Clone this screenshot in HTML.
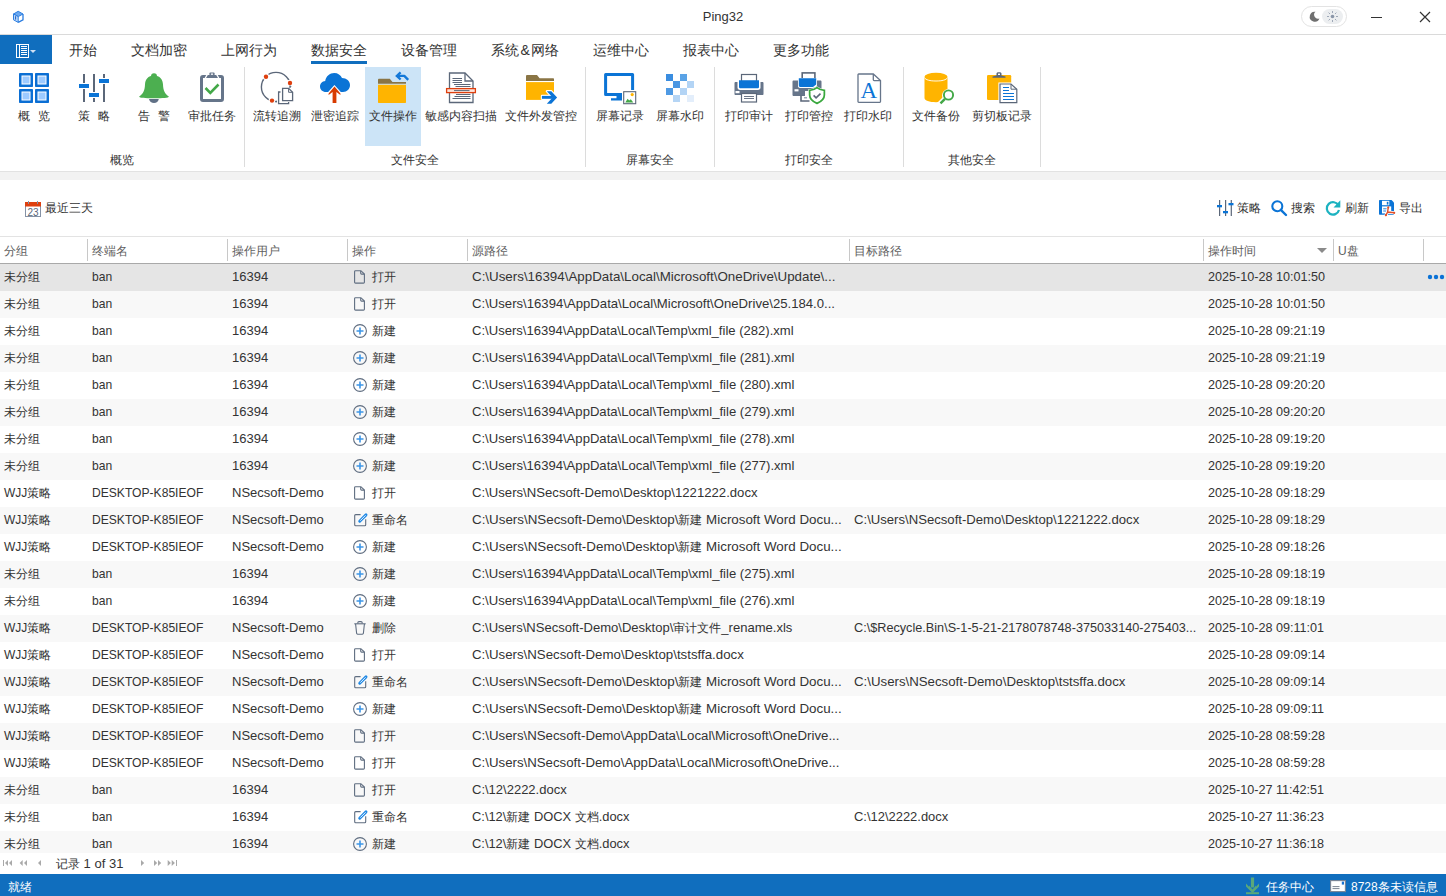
<!DOCTYPE html><html><head><meta charset="utf-8"><title>Ping32</title><style>
*{margin:0;padding:0;box-sizing:border-box}
html,body{width:1446px;height:896px;overflow:hidden;background:#fff}
body{position:relative;font-family:"Liberation Sans",sans-serif;color:#333;font-size:13px}
.a{position:absolute}
.c{font-size:12px}
.sp{display:inline-block;width:8px}
svg{position:absolute;overflow:visible}
.tab{position:absolute;top:36px;height:28px;line-height:28px;font-size:14px;color:#333;white-space:nowrap}
.rl{position:absolute;top:108px;height:16px;line-height:16px;font-size:12px;color:#333;white-space:nowrap;text-align:center}
.gl{position:absolute;top:152px;height:16px;line-height:16px;font-size:12px;color:#333;white-space:nowrap;text-align:center}
.sep{position:absolute;top:67px;width:1px;height:100px;background:#dcdcdc}
.hd{position:absolute;top:238px;height:26px;line-height:26px;font-size:12px;color:#606060;white-space:nowrap}
.hs{position:absolute;top:239px;width:1px;height:22px;background:#c8c8c8}
.row{position:absolute;left:0;width:1446px;height:27px}
.row.g{background:#f8f8f8}
.row.sel{background:#e5e5e5}
.cell{position:absolute;top:-1px;height:27px;line-height:27px;white-space:nowrap;color:#333}
.tb{position:absolute;top:200px;height:16px;line-height:16px;font-size:12px;color:#333;white-space:nowrap}
</style></head><body>
<svg style="left:12px;top:10px" width="13" height="14" viewBox="0 0 13 14">
<path d="M1.5 4 L6.2 6.6 L11 4 L6.2 1.3 Z" fill="#6aa8f0" stroke="#2b7de0" stroke-width="1"/>
<path d="M1.5 4 V9.8 L6.2 12.4 V6.6 Z" fill="#bcd8fa" stroke="#2b7de0" stroke-width="1"/>
<path d="M11 4 V9.8 L6.2 12.4" fill="none" stroke="#2b7de0" stroke-width="1.3"/>
<path d="M3.6 6.2 V9.6" stroke="#1f5fc0" stroke-width="1"/>
</svg>
<div class="a" style="left:0;top:0;width:1446px;height:34px;line-height:33px;text-align:center;font-size:13px;color:#333">Ping32</div>
<div class="a" style="left:1301px;top:6px;width:46px;height:21px;border:1px solid #e3e3e3;border-radius:11px;background:#fff"></div>
<div class="a" style="left:1322px;top:9px;width:21px;height:15px;border-radius:8px;background:#eceef0"></div>
<svg style="left:1309px;top:11px" width="11" height="11" viewBox="0 0 11 11"><path d="M6.5 0.8 A5 5 0 1 0 10.4 7.6 A4 4 0 0 1 6.5 0.8 Z" fill="#707070"/></svg>
<svg style="left:1326px;top:10px" width="13" height="13" viewBox="0 0 13 13"><circle cx="6.5" cy="6.5" r="1.8" fill="#8a96a8"/>
<g stroke="#8a96a8" stroke-width="0.8"><path d="M6.5 1V3M6.5 10V12M1 6.5H3M10 6.5H12M2.6 2.6L4 4M9 9L10.4 10.4M2.6 10.4L4 9M9 4L10.4 2.6"/></g></svg>
<div class="a" style="left:1371px;top:17px;width:11px;height:1px;background:#333"></div>
<svg style="left:1419px;top:11px" width="12" height="12" viewBox="0 0 12 12"><path d="M1 1L11 11M11 1L1 11" stroke="#333" stroke-width="1.2"/></svg>
<div class="a" style="left:0;top:34px;width:1446px;height:1px;background:#dadada"></div>
<div class="a" style="left:0;top:35px;width:52px;height:29px;background:#106ebe"></div>
<svg style="left:16px;top:44px" width="21" height="14" viewBox="0 0 21 14" shape-rendering="crispEdges">
<rect x="0" y="0" width="13" height="1" fill="#fff"/><rect x="0" y="13" width="13" height="1" fill="#fff"/>
<rect x="0" y="0" width="1" height="14" fill="#fff"/><rect x="12" y="0" width="1" height="14" fill="#fff"/>
<rect x="3" y="0" width="1" height="14" fill="#fff"/>
<rect x="5" y="2" width="6" height="1" fill="#fff"/><rect x="5" y="4" width="6" height="1" fill="#fff"/><rect x="5" y="6" width="6" height="1" fill="#fff"/><rect x="5" y="8" width="6" height="1" fill="#fff"/><rect x="5" y="10" width="6" height="1" fill="#fff"/>
<path d="M14 6 H20 L17 9 Z" fill="#cfe0f3" shape-rendering="auto"/>
</svg>
<div class="tab" style="left:69px">开始</div>
<div class="tab" style="left:131px">文档加密</div>
<div class="tab" style="left:221px">上网行为</div>
<div class="tab" style="left:311px">数据安全</div>
<div class="tab" style="left:401px">设备管理</div>
<div class="tab" style="left:491px">系统<span style="margin:0 1.4px">&amp;</span>网络</div>
<div class="tab" style="left:593px">运维中心</div>
<div class="tab" style="left:683px">报表中心</div>
<div class="tab" style="left:773px">更多功能</div>
<div class="a" style="left:311px;top:61px;width:56px;height:3px;background:#106ebe"></div>
<div class="a" style="left:365px;top:67px;width:56px;height:79px;background:#cce4f7"></div>
<div class="sep" style="left:244px"></div>
<div class="sep" style="left:585px"></div>
<div class="sep" style="left:714px"></div>
<div class="sep" style="left:903px"></div>
<div class="sep" style="left:1040px"></div>
<div class="a" style="left:0;top:171px;width:1446px;height:1px;background:#e2e2e2"></div>
<div class="a" style="left:0;top:172px;width:1446px;height:8px;background:#f2f2f2"></div>
<div class="rl" style="left:-16px;width:100px">概<i class="sp"></i>览</div>
<div class="rl" style="left:44px;width:100px">策<i class="sp"></i>略</div>
<div class="rl" style="left:104px;width:100px">告<i class="sp"></i>警</div>
<div class="rl" style="left:162px;width:100px">审批任务</div>
<div class="rl" style="left:227px;width:100px">流转追溯</div>
<div class="rl" style="left:285px;width:100px">泄密追踪</div>
<div class="rl" style="left:343px;width:100px">文件操作</div>
<div class="rl" style="left:411px;width:100px">敏感内容扫描</div>
<div class="rl" style="left:491px;width:100px">文件外发管控</div>
<div class="rl" style="left:570px;width:100px">屏幕记录</div>
<div class="rl" style="left:630px;width:100px">屏幕水印</div>
<div class="rl" style="left:699px;width:100px">打印审计</div>
<div class="rl" style="left:759px;width:100px">打印管控</div>
<div class="rl" style="left:818px;width:100px">打印水印</div>
<div class="rl" style="left:886px;width:100px">文件备份</div>
<div class="rl" style="left:952px;width:100px">剪切板记录</div>
<div class="gl" style="left:72px;width:100px">概览</div>
<div class="gl" style="left:365px;width:100px">文件安全</div>
<div class="gl" style="left:600px;width:100px">屏幕安全</div>
<div class="gl" style="left:759px;width:100px">打印安全</div>
<div class="gl" style="left:922px;width:100px">其他安全</div>
<svg style="left:18px;top:72px" width="32" height="32" viewBox="0 0 32 32"><rect x="1" y="1" width="14" height="14" rx="0.8" fill="#0b6fd4"/><rect x="3.5" y="3.5" width="9" height="9" fill="#fff"/><rect x="4.5" y="4.5" width="7" height="7" fill="#9ccaff"/><rect x="17" y="1" width="14" height="14" rx="0.8" fill="#0b6fd4"/><rect x="19.5" y="3.5" width="9" height="9" fill="#fff"/><rect x="20.5" y="4.5" width="7" height="7" fill="#9ccaff"/><rect x="1" y="17" width="14" height="14" rx="0.8" fill="#0b6fd4"/><rect x="3.5" y="19.5" width="9" height="9" fill="#fff"/><rect x="4.5" y="20.5" width="7" height="7" fill="#9ccaff"/><rect x="17" y="17" width="14" height="14" rx="0.8" fill="#0b6fd4"/><rect x="19.5" y="19.5" width="9" height="9" fill="#fff"/><rect x="20.5" y="20.5" width="7" height="7" fill="#9ccaff"/></svg>
<svg style="left:78px;top:72px" width="32" height="32" viewBox="0 0 32 32">
<g fill="#5b6779"><rect x="5" y="2" width="2" height="9"/><rect x="5" y="17" width="2" height="13"/>
<rect x="15" y="2" width="2" height="18"/><rect x="15" y="26" width="2" height="4"/>
<rect x="25" y="2" width="2" height="4"/><rect x="25" y="12" width="2" height="18"/></g>
<g fill="#0b74d6"><rect x="1" y="12" width="10" height="4"/><rect x="11" y="21" width="10" height="4"/><rect x="21" y="7" width="10" height="4"/></g>
</svg>
<svg style="left:138px;top:72px" width="32" height="32" viewBox="0 0 32 32">
<circle cx="16" cy="4.3" r="3" fill="#4caf50"/>
<path d="M16 3.5 C10 3.5 7.2 7.5 7 12.5 C6.8 18 5.5 21.5 1 24.8 C1.5 25.8 7 26.3 16 26.3 C25 26.3 30.5 25.8 31 24.8 C26.5 21.5 25.2 18 25 12.5 C24.8 7.5 22 3.5 16 3.5Z" fill="#4caf50"/>
<path d="M11 27 H20.8 C20.3 29.6 18.5 31 16 31 C13.5 31 11.6 29.6 11 27Z" fill="#607086"/>
</svg>
<svg style="left:198px;top:72px" width="32" height="32" viewBox="0 0 32 32">
<rect x="3.5" y="4.5" width="21" height="24" rx="1.5" fill="#fff" stroke="#66758a" stroke-width="3"/>
<path d="M6.4 6.4 H21.6 L19.5 2.4 H8.5 Z" fill="#fff"/>
<path d="M8 5.9 H20 L18.2 3 H9.8 Z" fill="#66758a"/>
<rect x="11.4" y="0.4" width="5.2" height="3.2" rx="1" fill="#66758a"/>
<rect x="12.9" y="1.5" width="2.2" height="1.3" fill="#fff"/>
<path d="M7.5 16 L12.3 20.8 L20.5 12.5" fill="none" stroke="#43a848" stroke-width="2.6"/>
</svg>
<svg style="left:260px;top:71px" width="34" height="34" viewBox="0 0 34 34">
<circle cx="16" cy="16" r="14.6" fill="none" stroke="#5b6779" stroke-width="1.4"/>
<circle cx="6" cy="5.8" r="3.3" fill="#fff"/><circle cx="30" cy="12" r="3.3" fill="#fff"/><circle cx="12" cy="29.6" r="3.3" fill="#fff"/>
<circle cx="6" cy="5.8" r="2.2" fill="#de3f0e"/><circle cx="30" cy="12" r="2.2" fill="#de3f0e"/><circle cx="12" cy="29.6" r="2.2" fill="#de3f0e"/>
<rect x="17" y="16" width="17" height="18" fill="#fff"/>
<path d="M30 14.5 V17 M15.5 30.5 H17" stroke="#5b6779" stroke-width="1.3"/>
<path d="M20.5 21 H18.6 V32.6 H28.6 V31" fill="none" stroke="#5b6779" stroke-width="1.3"/>
<path d="M22.6 17.3 H28.6 L32.6 21.3 V29.6 H22.6 Z" fill="#fff" stroke="#5b6779" stroke-width="1.3"/>
<path d="M28.6 17.3 V21.3 H32.6" fill="none" stroke="#5b6779" stroke-width="1"/>
</svg>
<svg style="left:319px;top:72px" width="32" height="32" viewBox="0 0 32 32">
<path d="M7 20 C3.5 20 1 17.5 1 14.5 C1 11.5 3.3 9.2 6.2 9 C7 4.2 10.8 1 15.2 1 C18.8 1 21.8 3 23 6 C27.5 6 31 9 31 13 C31 17 28 20 24 20 Z" fill="#0b74d6"/>
<path d="M15.4 13 L8 21.2 V24.5 H13.5 V32 H17.5 V24.5 H23 V21.2 Z" fill="#fff"/>
<path d="M15.5 14.5 L9.6 21.5 V23 L13.6 20 V31 H17.4 V20 L21.4 23 V21.5 Z" fill="#d83b01"/>
</svg>
<svg style="left:377px;top:71px" width="34" height="34" viewBox="0 0 34 34">
<path d="M1 9 C1 8.3 1.5 7.8 2.2 7.8 H12.8 L15.5 11 H29 V12.8 H1Z" fill="#8a7545"/>
<path d="M1 13.8 H29 V31.3 C29 31.7 28.7 32 28.3 32 H1.7 C1.3 32 1 31.7 1 31.3Z" fill="#ffb400"/>
<path d="M20 4.9 H27.3 L31.2 8.9" fill="none" stroke="#1478d8" stroke-width="2.3" stroke-linejoin="round"/>
<path d="M23.6 1.3 L19.8 4.9 L23.6 8.5" fill="none" stroke="#1478d8" stroke-width="2.3"/>
</svg>
<svg style="left:445px;top:72px" width="32" height="32" viewBox="0 0 32 32">
<path d="M4.5 1 H20 L28 9 V30.5 H4.5 Z" fill="#fff" stroke="#5b6779" stroke-width="1.3"/>
<path d="M20 1 V9 H28" fill="none" stroke="#5b6779" stroke-width="1.3"/>
<g stroke="#5b6779" stroke-width="1"><path d="M7.5 6.5H17M7.5 8.5H17M7.5 10.5H17M9 12.5H25.5M10.5 14.5H25.5M11 22.5H25.5M9.5 24.5H25.5M7.5 26.5H25.5"/></g>
<rect x="1.6" y="16.6" width="28.8" height="4" fill="#fde3da" stroke="#de3f0e" stroke-width="1.3"/>
<path d="M9 18.6H24.5" stroke="#5b6779" stroke-width="1"/>
</svg>
<svg style="left:524px;top:72px" width="34" height="34" viewBox="0 0 34 34">
<path d="M2 4 C2 3.4 2.4 3.1 3 3.1 H13 L15.6 6.3 H29.3 C29.7 6.3 30 6.6 30 7 V9 H2 Z" fill="#8a7545"/>
<path d="M2 10.1 H30 V27.9 H2Z" fill="#ffb400"/>
<g stroke="#fff" stroke-width="2.2" fill="#fff" stroke-linejoin="round"><path d="M22.8 19.2 H27.3 L33.1 25.5 L27.3 31.7 H22.8 L28.6 25.5 Z"/><rect x="17.9" y="23.9" width="10" height="2.9"/></g>
<g fill="#0b74d6"><path d="M22.8 19.2 H27.3 L33.1 25.5 L27.3 31.7 H22.8 L28.6 25.5 Z"/><rect x="17.9" y="23.9" width="11" height="2.9"/></g>
</svg>
<svg style="left:603px;top:72px" width="34" height="34" viewBox="0 0 34 34">
<path d="M19 22.4 H2.6 V2.4 H29.6 V17.9" fill="none" stroke="#0b74d6" stroke-width="3" stroke-linejoin="round"/>
<path d="M8 26.3 H13.5 V23.5 H19 V28.6 H8 Z" fill="#0b74d6"/>
<rect x="20.7" y="19.7" width="12" height="12" fill="#fff" stroke="#5b6779" stroke-width="1.1"/>
<circle cx="29.2" cy="22.6" r="1.6" fill="#ffb400"/>
<path d="M22.3 30.5 L24.6 26.8 L26.2 28.6 L27.8 27.2 L30.3 30.5 Z" fill="#43a848"/>
</svg>
<svg style="left:666px;top:74px" width="28" height="28" viewBox="0 0 28 28"><rect x="0" y="0" width="7" height="7" fill="#3a8de0"/><rect x="14" y="0" width="7" height="7" fill="#5aa3e6"/><rect x="7" y="7" width="7" height="7" fill="#4a97e3"/><rect x="21" y="7" width="7" height="7" fill="#b3d4f5"/><rect x="0" y="14" width="7" height="7" fill="#4f9ae4"/><rect x="14" y="14" width="7" height="7" fill="#b3d4f5"/><rect x="7" y="21" width="7" height="7" fill="#b5d5f5"/><rect x="21" y="21" width="7" height="7" fill="#e3eefb"/></svg>
<svg style="left:733px;top:72px" width="32" height="32" viewBox="0 0 32 32">
<rect x="8.5" y="2.5" width="15" height="7" fill="#fff" stroke="#5b6779" stroke-width="1.2"/>
<path d="M2.5 10 C2 10 1.5 10.5 1.5 11 V22 C1.5 22.8 2 23 2.5 23 H29.5 C30 23 30.5 22.8 30.5 22 V11 C30.5 10.5 30 10 29.5 10 Z" fill="#66758a"/>
<path d="M4.5 9.5 H27.5 V15.5 C27.5 17 26.5 18 25 18 H7 C5.5 18 4.5 17 4.5 15.5 Z" fill="#fff"/>
<path d="M6 8.2 H26 V15 C26 15.7 25.6 16.2 25 16.2 H7 C6.4 16.2 6 15.7 6 15 Z" fill="#0b74d6"/>
<rect x="2.5" y="19" width="4" height="2.2" fill="#fff"/>
<rect x="8.5" y="21.5" width="15" height="8.5" fill="#fff" stroke="#5b6779" stroke-width="1.2"/>
<path d="M11 24.5H21M11 26.5H21" stroke="#5b6779" stroke-width="0.9"/>
</svg>
<svg style="left:792px;top:71px" width="34" height="34" viewBox="0 0 34 34">
<rect x="10.2" y="1.9" width="12.7" height="6.5" fill="#fff" stroke="#5b6779" stroke-width="1.6"/>
<path d="M1.5 9.5 C1 9.5 0.5 10 0.5 10.5 V24 C0.5 24.5 1 25 1.5 25 H13 V20 H29.5 V10.5 C29.5 10 29 9.5 28.5 9.5 Z" fill="#66758a"/>
<path d="M6 7 H25 V14 C25 15.5 24 16 23 16.5 L20.5 17 H8 C6.8 17 6 16 6 15 Z" fill="#fff"/>
<path d="M6.8 7.3 H24.2 V13.5 L21 16 H8.5 C7.5 16 6.8 15.3 6.8 14.5Z" fill="#0b74d6"/>
<rect x="2.5" y="18.2" width="4" height="2.2" fill="#fff"/>
<path d="M9 24.5 V30 H17.5" fill="none" stroke="#5b6779" stroke-width="1.6"/>
<path d="M12 26.8 H15" stroke="#8a96a8" stroke-width="1.2"/>
<g transform="translate(25 24.5) scale(0.92) translate(-25 -23.6)"><path d="M25 13.5 C22 15.8 19 16.5 15.5 16.8 V23 C15.5 28 19 31 25 33.5 C31 31 34.5 28 34.5 23 V16.8 C31 16.5 28 15.8 25 13.5Z" fill="#fff"/>
<path d="M25 15 C22.5 17 19.8 17.8 17 18 V23 C17 27.5 20 30 25 32.2 C30 30 33 27.5 33 23 V18 C30.2 17.8 27.5 17 25 15Z" fill="#fff" stroke="#3aa83e" stroke-width="1.9"/>
<path d="M21.3 23.5 L24 26.2 L28.8 21.5" fill="none" stroke="#5b6779" stroke-width="1.7"/>
</g>
</svg>
<svg style="left:856px;top:72px" width="26" height="32" viewBox="0 0 26 32">
<path d="M2.7 2 H17.3 L24.5 8.6 V29.6 C24.5 30 24.2 30.3 23.8 30.3 H2.7 C2.3 30.3 2 30 2 29.6 V2.7 C2 2.3 2.3 2 2.7 2 Z" fill="#fff" stroke="#66758a" stroke-width="1.3"/>
<path d="M17.3 2 V7.8 C17.3 8.3 17.6 8.6 18.1 8.6 H24.5" fill="none" stroke="#66758a" stroke-width="1.3"/>
<text x="12.8" y="25.8" text-anchor="middle" font-family="Liberation Serif" font-size="23" fill="#0b74d6">A</text>
</svg>
<svg style="left:923px;top:72px" width="34" height="34" viewBox="0 0 34 34">
<path d="M1.5 5 V26 C1.5 28.5 6.5 30.2 13 30.2 C19.5 30.2 24.5 28.5 24.5 26 V5 Z" fill="#ffb400"/>
<ellipse cx="13" cy="4.8" rx="11.5" ry="4" fill="#ffb400"/>
<path d="M1.5 5.5 C2.5 8 7 9 13 9 C19 9 23.5 8 24.5 5.5" fill="none" stroke="#fff" stroke-width="0.9"/>
<circle cx="25.5" cy="23.5" r="6.5" fill="#fff"/>
<path d="M21.5 27 L16 32.5" stroke="#fff" stroke-width="5"/>
<circle cx="25.5" cy="23" r="4.6" fill="#fff" stroke="#43a848" stroke-width="1.9"/>
<path d="M22 26.8 L17.5 31.3" stroke="#43a848" stroke-width="2.4"/>
</svg>
<svg style="left:986px;top:72px" width="32" height="32" viewBox="0 0 32 32">
<rect x="1" y="3" width="24.2" height="25" rx="1.2" fill="#ffb400"/>
<path d="M6.5 5.8 H19.5 V4.6 L15.5 3.6 V1.5 C15.5 0.8 14.5 0.3 13 0.3 C11.5 0.3 10.5 0.8 10.5 1.5 V3.6 L6.5 4.6Z" fill="#5b6779"/><rect x="12" y="1.6" width="2" height="1.4" fill="#fff"/>
<path d="M13.4 11.5 H25 L31 17 V31.3 H13.4 Z" fill="#fff" stroke="#fff" stroke-width="2"/>
<path d="M14 12 H25 L30.8 17.2 V30.7 H14 Z" fill="#fff" stroke="#5b6779" stroke-width="1.2"/>
<path d="M25 12 V17.2 H30.8" fill="none" stroke="#5b6779" stroke-width="1"/>
<path d="M17 15.5H23M17 18.5H23M17 21.5H28M17 24.5H28M17 27.5H28" stroke="#0b74d6" stroke-width="1.1"/>
</svg>
<svg style="left:25px;top:201px" width="16" height="16" viewBox="0 0 16 16">
<rect x="0.5" y="3" width="15" height="12.5" fill="#fff" stroke="#8592a6" stroke-width="1"/>
<rect x="0" y="1" width="16" height="4.5" fill="#de3f0e"/>
<path d="M3.5 0V3M12.5 0V3" stroke="#8592a6" stroke-width="1"/>
<text x="8" y="14.6" text-anchor="middle" font-family="Liberation Sans" font-size="10" fill="#5b6779">23</text>
</svg>
<div class="tb" style="left:45px">最近三天</div>
<svg style="left:1217px;top:200px" width="16" height="16" viewBox="0 0 16 16">
<g fill="#5b6779"><rect x="2" y="0" width="1.2" height="16"/><rect x="8" y="0" width="1.2" height="16"/><rect x="13.7" y="0" width="1.2" height="16"/></g>
<g fill="#0b74d6"><rect x="0" y="5" width="5" height="2.3"/><rect x="6" y="11" width="5" height="2.3"/><rect x="11.5" y="3" width="5" height="2.3"/></g>
</svg>
<div class="tb" style="left:1237px">策略</div>
<svg style="left:1271px;top:200px" width="16" height="16" viewBox="0 0 16 16">
<circle cx="6.3" cy="6.3" r="5" fill="none" stroke="#0b74d6" stroke-width="2.1"/>
<path d="M9.8 9.8 L15 15" stroke="#0b74d6" stroke-width="2.4" stroke-linecap="round"/>
</svg>
<div class="tb" style="left:1291px">搜索</div>
<svg style="left:1325px;top:200px" width="16" height="16" viewBox="0 0 16 16">
<path d="M13.5 5.5 A6.2 6.2 0 1 0 14 10" fill="none" stroke="#1cb2c0" stroke-width="2.2"/>
<path d="M15.3 0.3 V7.5 H8.5 Z" fill="#1cb2c0"/>
</svg>
<div class="tb" style="left:1345px">刷新</div>
<svg style="left:1379px;top:200px" width="18" height="17" viewBox="0 0 18 17">
<path d="M0 1 C0 0.4 0.4 0 1 0 H12.5 L15 2.5 V13.7 C15 14.3 14.6 14.7 14 14.7 H1 C0.4 14.7 0 14.3 0 13.7 Z" fill="#0b74d6"/>
<rect x="3" y="0.8" width="7.3" height="4.4" fill="#fff"/><rect x="7.8" y="1.8" width="1.6" height="2.8" fill="#0b74d6"/>
<rect x="3" y="6.4" width="9.2" height="7" fill="#fff"/>
<path d="M4.2 8.8H8.2M4.2 11H7.5" stroke="#0b74d6" stroke-width="0.9"/>
<path d="M9.3 7.2 L8.6 12 L6.8 15.4 M8.6 12 L15.3 12.8" fill="none" stroke="#fff" stroke-width="3"/>
<path d="M9.3 7.2 L8.6 12 L6.8 15.4 M8.6 12 L15.3 12.8" fill="none" stroke="#e0502a" stroke-width="1.4" stroke-linecap="round"/>
<circle cx="9.3" cy="7.4" r="1" fill="#e0502a"/><circle cx="6.9" cy="15.2" r="1.1" fill="#e0502a"/><circle cx="15.2" cy="12.8" r="1.1" fill="#e0502a"/>
</svg>
<div class="tb" style="left:1399px">导出</div>
<div class="a" style="left:0;top:236px;width:1446px;height:1px;background:#e3e3e3"></div>
<div class="a" style="left:0;top:263px;width:1446px;height:1px;background:#a9a9a9"></div>
<div class="hd" style="left:4px">分组</div>
<div class="hs" style="left:87px"></div>
<div class="hd" style="left:92px">终端名</div>
<div class="hs" style="left:227px"></div>
<div class="hd" style="left:232px">操作用户</div>
<div class="hs" style="left:347px"></div>
<div class="hd" style="left:352px">操作</div>
<div class="hs" style="left:467px"></div>
<div class="hd" style="left:472px">源路径</div>
<div class="hs" style="left:849px"></div>
<div class="hd" style="left:854px">目标路径</div>
<div class="hs" style="left:1203px"></div>
<div class="hd" style="left:1208px">操作时间</div>
<div class="hs" style="left:1333px"></div>
<div class="hd" style="left:1338px">U盘</div>
<div class="hs" style="left:1423px"></div>
<svg style="left:1317px;top:248px" width="10" height="5" viewBox="0 0 10 5"><path d="M0 0H10L5 5Z" fill="#8a8a8a"/></svg>
<div class="a" style="left:0;top:264px;width:1446px;height:589px;overflow:hidden">
<div class="row sel" style="top:0px">
<div class="cell" style="left:4px"><span style="font-size:12px"><span class="c">未分组</span></span></div>
<div class="cell" style="left:92px"><span style="font-size:12.1px">ban</span></div>
<div class="cell" style="left:232px">16394</div>
<svg style="left:354px;top:6px" width="12" height="14" viewBox="0 0 12 14"><path d="M1.5 0.7 H6.9 L10.4 4.1 V12.2 C10.4 12.8 10.1 13.1 9.5 13.1 H1.5 C0.9 13.1 0.6 12.8 0.6 12.2 V1.5 C0.6 0.9 0.9 0.7 1.5 0.7Z" fill="none" stroke="#5f6d80" stroke-width="1.1"/><path d="M6.7 0.9 V3.2 C6.7 3.8 7 4.1 7.6 4.1 H10.2" fill="none" stroke="#5f6d80" stroke-width="1.1"/></svg>
<div class="cell" style="left:372px"><span class="c">打开</span></div>
<div class="cell" style="left:472px"><span style="font-size:13.35px">C:\Users\16394\AppData\Local\Microsoft\OneDrive\Update\...</span></div>
<div class="cell" style="left:1208px"><span style="font-size:12.6px">2025-10-28 10:01:50</span></div>
<svg style="left:1427px;top:10px" width="19" height="6" viewBox="0 0 19 6"><circle cx="3" cy="3" r="2.2" fill="#0b72d6"/><circle cx="9" cy="3" r="2.2" fill="#0b72d6"/><circle cx="15" cy="3" r="2.2" fill="#0b72d6"/></svg>
</div>
<div class="row g" style="top:27px">
<div class="cell" style="left:4px"><span style="font-size:12px"><span class="c">未分组</span></span></div>
<div class="cell" style="left:92px"><span style="font-size:12.1px">ban</span></div>
<div class="cell" style="left:232px">16394</div>
<svg style="left:354px;top:6px" width="12" height="14" viewBox="0 0 12 14"><path d="M1.5 0.7 H6.9 L10.4 4.1 V12.2 C10.4 12.8 10.1 13.1 9.5 13.1 H1.5 C0.9 13.1 0.6 12.8 0.6 12.2 V1.5 C0.6 0.9 0.9 0.7 1.5 0.7Z" fill="none" stroke="#5f6d80" stroke-width="1.1"/><path d="M6.7 0.9 V3.2 C6.7 3.8 7 4.1 7.6 4.1 H10.2" fill="none" stroke="#5f6d80" stroke-width="1.1"/></svg>
<div class="cell" style="left:372px"><span class="c">打开</span></div>
<div class="cell" style="left:472px"><span style="font-size:13.15px">C:\Users\16394\AppData\Local\Microsoft\OneDrive\25.184.0...</span></div>
<div class="cell" style="left:1208px"><span style="font-size:12.6px">2025-10-28 10:01:50</span></div>
</div>
<div class="row" style="top:54px">
<div class="cell" style="left:4px"><span style="font-size:12px"><span class="c">未分组</span></span></div>
<div class="cell" style="left:92px"><span style="font-size:12.1px">ban</span></div>
<div class="cell" style="left:232px">16394</div>
<svg style="left:353px;top:6px" width="14" height="14" viewBox="0 0 14 14"><circle cx="7" cy="7" r="6.4" fill="none" stroke="#5f6d80" stroke-width="1.1"/><path d="M7 3.5V10.5M3.5 7H10.5" stroke="#3c95e6" stroke-width="1.6"/></svg>
<div class="cell" style="left:372px"><span class="c">新建</span></div>
<div class="cell" style="left:472px"><span style="font-size:13.07px">C:\Users\16394\AppData\Local\Temp\xml_file (282).xml</span></div>
<div class="cell" style="left:1208px"><span style="font-size:12.6px">2025-10-28 09:21:19</span></div>
</div>
<div class="row g" style="top:81px">
<div class="cell" style="left:4px"><span style="font-size:12px"><span class="c">未分组</span></span></div>
<div class="cell" style="left:92px"><span style="font-size:12.1px">ban</span></div>
<div class="cell" style="left:232px">16394</div>
<svg style="left:353px;top:6px" width="14" height="14" viewBox="0 0 14 14"><circle cx="7" cy="7" r="6.4" fill="none" stroke="#5f6d80" stroke-width="1.1"/><path d="M7 3.5V10.5M3.5 7H10.5" stroke="#3c95e6" stroke-width="1.6"/></svg>
<div class="cell" style="left:372px"><span class="c">新建</span></div>
<div class="cell" style="left:472px"><span style="font-size:13.1px">C:\Users\16394\AppData\Local\Temp\xml_file (281).xml</span></div>
<div class="cell" style="left:1208px"><span style="font-size:12.6px">2025-10-28 09:21:19</span></div>
</div>
<div class="row" style="top:108px">
<div class="cell" style="left:4px"><span style="font-size:12px"><span class="c">未分组</span></span></div>
<div class="cell" style="left:92px"><span style="font-size:12.1px">ban</span></div>
<div class="cell" style="left:232px">16394</div>
<svg style="left:353px;top:6px" width="14" height="14" viewBox="0 0 14 14"><circle cx="7" cy="7" r="6.4" fill="none" stroke="#5f6d80" stroke-width="1.1"/><path d="M7 3.5V10.5M3.5 7H10.5" stroke="#3c95e6" stroke-width="1.6"/></svg>
<div class="cell" style="left:372px"><span class="c">新建</span></div>
<div class="cell" style="left:472px"><span style="font-size:13.1px">C:\Users\16394\AppData\Local\Temp\xml_file (280).xml</span></div>
<div class="cell" style="left:1208px"><span style="font-size:12.6px">2025-10-28 09:20:20</span></div>
</div>
<div class="row g" style="top:135px">
<div class="cell" style="left:4px"><span style="font-size:12px"><span class="c">未分组</span></span></div>
<div class="cell" style="left:92px"><span style="font-size:12.1px">ban</span></div>
<div class="cell" style="left:232px">16394</div>
<svg style="left:353px;top:6px" width="14" height="14" viewBox="0 0 14 14"><circle cx="7" cy="7" r="6.4" fill="none" stroke="#5f6d80" stroke-width="1.1"/><path d="M7 3.5V10.5M3.5 7H10.5" stroke="#3c95e6" stroke-width="1.6"/></svg>
<div class="cell" style="left:372px"><span class="c">新建</span></div>
<div class="cell" style="left:472px"><span style="font-size:13.1px">C:\Users\16394\AppData\Local\Temp\xml_file (279).xml</span></div>
<div class="cell" style="left:1208px"><span style="font-size:12.6px">2025-10-28 09:20:20</span></div>
</div>
<div class="row" style="top:162px">
<div class="cell" style="left:4px"><span style="font-size:12px"><span class="c">未分组</span></span></div>
<div class="cell" style="left:92px"><span style="font-size:12.1px">ban</span></div>
<div class="cell" style="left:232px">16394</div>
<svg style="left:353px;top:6px" width="14" height="14" viewBox="0 0 14 14"><circle cx="7" cy="7" r="6.4" fill="none" stroke="#5f6d80" stroke-width="1.1"/><path d="M7 3.5V10.5M3.5 7H10.5" stroke="#3c95e6" stroke-width="1.6"/></svg>
<div class="cell" style="left:372px"><span class="c">新建</span></div>
<div class="cell" style="left:472px"><span style="font-size:13.1px">C:\Users\16394\AppData\Local\Temp\xml_file (278).xml</span></div>
<div class="cell" style="left:1208px"><span style="font-size:12.6px">2025-10-28 09:19:20</span></div>
</div>
<div class="row g" style="top:189px">
<div class="cell" style="left:4px"><span style="font-size:12px"><span class="c">未分组</span></span></div>
<div class="cell" style="left:92px"><span style="font-size:12.1px">ban</span></div>
<div class="cell" style="left:232px">16394</div>
<svg style="left:353px;top:6px" width="14" height="14" viewBox="0 0 14 14"><circle cx="7" cy="7" r="6.4" fill="none" stroke="#5f6d80" stroke-width="1.1"/><path d="M7 3.5V10.5M3.5 7H10.5" stroke="#3c95e6" stroke-width="1.6"/></svg>
<div class="cell" style="left:372px"><span class="c">新建</span></div>
<div class="cell" style="left:472px"><span style="font-size:13.1px">C:\Users\16394\AppData\Local\Temp\xml_file (277).xml</span></div>
<div class="cell" style="left:1208px"><span style="font-size:12.6px">2025-10-28 09:19:20</span></div>
</div>
<div class="row" style="top:216px">
<div class="cell" style="left:4px"><span style="font-size:12px">WJJ<span class="c">策略</span></span></div>
<div class="cell" style="left:92px"><span style="font-size:12.1px">DESKTOP-K85IEOF</span></div>
<div class="cell" style="left:232px">NSecsoft-Demo</div>
<svg style="left:354px;top:6px" width="12" height="14" viewBox="0 0 12 14"><path d="M1.5 0.7 H6.9 L10.4 4.1 V12.2 C10.4 12.8 10.1 13.1 9.5 13.1 H1.5 C0.9 13.1 0.6 12.8 0.6 12.2 V1.5 C0.6 0.9 0.9 0.7 1.5 0.7Z" fill="none" stroke="#5f6d80" stroke-width="1.1"/><path d="M6.7 0.9 V3.2 C6.7 3.8 7 4.1 7.6 4.1 H10.2" fill="none" stroke="#5f6d80" stroke-width="1.1"/></svg>
<div class="cell" style="left:372px"><span class="c">打开</span></div>
<div class="cell" style="left:472px"><span style="font-size:13.15px">C:\Users\NSecsoft-Demo\Desktop\1221222.docx</span></div>
<div class="cell" style="left:1208px"><span style="font-size:12.6px">2025-10-28 09:18:29</span></div>
</div>
<div class="row g" style="top:243px">
<div class="cell" style="left:4px"><span style="font-size:12px">WJJ<span class="c">策略</span></span></div>
<div class="cell" style="left:92px"><span style="font-size:12.1px">DESKTOP-K85IEOF</span></div>
<div class="cell" style="left:232px">NSecsoft-Demo</div>
<svg style="left:354px;top:6px" width="14" height="14" viewBox="0 0 14 14"><path d="M6.6 1.6 H1.7 C1 1.6 0.7 2 0.7 2.7 V11.7 C0.7 12.4 1 12.7 1.7 12.7 H10.7 C11.4 12.7 11.7 12.4 11.7 11.7 V6.3" fill="none" stroke="#5f6d80" stroke-width="1.1"/><path d="M5.7 8.2 L12 1.9" stroke="#1e88e5" stroke-width="2.9" stroke-linecap="round"/><path d="M6.5 7.4 L11.3 2.6" stroke="#fff" stroke-width="0.9" stroke-linecap="round"/></svg>
<div class="cell" style="left:372px"><span class="c">重命名</span></div>
<div class="cell" style="left:472px"><span style="font-size:13.36px">C:\Users\NSecsoft-Demo\Desktop\<span class="c">新建</span> Microsoft Word Docu...</span></div>
<div class="cell" style="left:854px"><span style="font-size:13.13px">C:\Users\NSecsoft-Demo\Desktop\1221222.docx</span></div>
<div class="cell" style="left:1208px"><span style="font-size:12.6px">2025-10-28 09:18:29</span></div>
</div>
<div class="row" style="top:270px">
<div class="cell" style="left:4px"><span style="font-size:12px">WJJ<span class="c">策略</span></span></div>
<div class="cell" style="left:92px"><span style="font-size:12.1px">DESKTOP-K85IEOF</span></div>
<div class="cell" style="left:232px">NSecsoft-Demo</div>
<svg style="left:353px;top:6px" width="14" height="14" viewBox="0 0 14 14"><circle cx="7" cy="7" r="6.4" fill="none" stroke="#5f6d80" stroke-width="1.1"/><path d="M7 3.5V10.5M3.5 7H10.5" stroke="#3c95e6" stroke-width="1.6"/></svg>
<div class="cell" style="left:372px"><span class="c">新建</span></div>
<div class="cell" style="left:472px"><span style="font-size:13.36px">C:\Users\NSecsoft-Demo\Desktop\<span class="c">新建</span> Microsoft Word Docu...</span></div>
<div class="cell" style="left:1208px"><span style="font-size:12.6px">2025-10-28 09:18:26</span></div>
</div>
<div class="row g" style="top:297px">
<div class="cell" style="left:4px"><span style="font-size:12px"><span class="c">未分组</span></span></div>
<div class="cell" style="left:92px"><span style="font-size:12.1px">ban</span></div>
<div class="cell" style="left:232px">16394</div>
<svg style="left:353px;top:6px" width="14" height="14" viewBox="0 0 14 14"><circle cx="7" cy="7" r="6.4" fill="none" stroke="#5f6d80" stroke-width="1.1"/><path d="M7 3.5V10.5M3.5 7H10.5" stroke="#3c95e6" stroke-width="1.6"/></svg>
<div class="cell" style="left:372px"><span class="c">新建</span></div>
<div class="cell" style="left:472px"><span style="font-size:13.1px">C:\Users\16394\AppData\Local\Temp\xml_file (275).xml</span></div>
<div class="cell" style="left:1208px"><span style="font-size:12.6px">2025-10-28 09:18:19</span></div>
</div>
<div class="row" style="top:324px">
<div class="cell" style="left:4px"><span style="font-size:12px"><span class="c">未分组</span></span></div>
<div class="cell" style="left:92px"><span style="font-size:12.1px">ban</span></div>
<div class="cell" style="left:232px">16394</div>
<svg style="left:353px;top:6px" width="14" height="14" viewBox="0 0 14 14"><circle cx="7" cy="7" r="6.4" fill="none" stroke="#5f6d80" stroke-width="1.1"/><path d="M7 3.5V10.5M3.5 7H10.5" stroke="#3c95e6" stroke-width="1.6"/></svg>
<div class="cell" style="left:372px"><span class="c">新建</span></div>
<div class="cell" style="left:472px"><span style="font-size:13.1px">C:\Users\16394\AppData\Local\Temp\xml_file (276).xml</span></div>
<div class="cell" style="left:1208px"><span style="font-size:12.6px">2025-10-28 09:18:19</span></div>
</div>
<div class="row g" style="top:351px">
<div class="cell" style="left:4px"><span style="font-size:12px">WJJ<span class="c">策略</span></span></div>
<div class="cell" style="left:92px"><span style="font-size:12.1px">DESKTOP-K85IEOF</span></div>
<div class="cell" style="left:232px">NSecsoft-Demo</div>
<svg style="left:354px;top:6px" width="12" height="14" viewBox="0 0 12 14"><path d="M0.3 2.8 H11.7" stroke="#5f6d80" stroke-width="1.1"/><path d="M3.8 2.6 V1.8 C3.8 1.1 4.3 0.6 5 0.6 H7 C7.7 0.6 8.2 1.1 8.2 1.8 V2.6" fill="none" stroke="#5f6d80" stroke-width="1.1"/><path d="M1.6 3 L2.6 12.2 C2.7 12.8 3 13.2 3.6 13.2 H8.4 C9 13.2 9.3 12.8 9.4 12.2 L10.4 3" fill="none" stroke="#5f6d80" stroke-width="1.1"/></svg>
<div class="cell" style="left:372px"><span class="c">删除</span></div>
<div class="cell" style="left:472px"><span style="font-size:13.04px">C:\Users\NSecsoft-Demo\Desktop\<span class="c">审计文件</span>_rename.xls</span></div>
<div class="cell" style="left:854px"><span style="font-size:12.68px">C:\$Recycle.Bin\S-1-5-21-2178078748-375033140-275403...</span></div>
<div class="cell" style="left:1208px"><span style="font-size:12.6px">2025-10-28 09:11:01</span></div>
</div>
<div class="row" style="top:378px">
<div class="cell" style="left:4px"><span style="font-size:12px">WJJ<span class="c">策略</span></span></div>
<div class="cell" style="left:92px"><span style="font-size:12.1px">DESKTOP-K85IEOF</span></div>
<div class="cell" style="left:232px">NSecsoft-Demo</div>
<svg style="left:354px;top:6px" width="12" height="14" viewBox="0 0 12 14"><path d="M1.5 0.7 H6.9 L10.4 4.1 V12.2 C10.4 12.8 10.1 13.1 9.5 13.1 H1.5 C0.9 13.1 0.6 12.8 0.6 12.2 V1.5 C0.6 0.9 0.9 0.7 1.5 0.7Z" fill="none" stroke="#5f6d80" stroke-width="1.1"/><path d="M6.7 0.9 V3.2 C6.7 3.8 7 4.1 7.6 4.1 H10.2" fill="none" stroke="#5f6d80" stroke-width="1.1"/></svg>
<div class="cell" style="left:372px"><span class="c">打开</span></div>
<div class="cell" style="left:472px"><span style="font-size:13.27px">C:\Users\NSecsoft-Demo\Desktop\tstsffa.docx</span></div>
<div class="cell" style="left:1208px"><span style="font-size:12.6px">2025-10-28 09:09:14</span></div>
</div>
<div class="row g" style="top:405px">
<div class="cell" style="left:4px"><span style="font-size:12px">WJJ<span class="c">策略</span></span></div>
<div class="cell" style="left:92px"><span style="font-size:12.1px">DESKTOP-K85IEOF</span></div>
<div class="cell" style="left:232px">NSecsoft-Demo</div>
<svg style="left:354px;top:6px" width="14" height="14" viewBox="0 0 14 14"><path d="M6.6 1.6 H1.7 C1 1.6 0.7 2 0.7 2.7 V11.7 C0.7 12.4 1 12.7 1.7 12.7 H10.7 C11.4 12.7 11.7 12.4 11.7 11.7 V6.3" fill="none" stroke="#5f6d80" stroke-width="1.1"/><path d="M5.7 8.2 L12 1.9" stroke="#1e88e5" stroke-width="2.9" stroke-linecap="round"/><path d="M6.5 7.4 L11.3 2.6" stroke="#fff" stroke-width="0.9" stroke-linecap="round"/></svg>
<div class="cell" style="left:372px"><span class="c">重命名</span></div>
<div class="cell" style="left:472px"><span style="font-size:13.36px">C:\Users\NSecsoft-Demo\Desktop\<span class="c">新建</span> Microsoft Word Docu...</span></div>
<div class="cell" style="left:854px"><span style="font-size:13.25px">C:\Users\NSecsoft-Demo\Desktop\tstsffa.docx</span></div>
<div class="cell" style="left:1208px"><span style="font-size:12.6px">2025-10-28 09:09:14</span></div>
</div>
<div class="row" style="top:432px">
<div class="cell" style="left:4px"><span style="font-size:12px">WJJ<span class="c">策略</span></span></div>
<div class="cell" style="left:92px"><span style="font-size:12.1px">DESKTOP-K85IEOF</span></div>
<div class="cell" style="left:232px">NSecsoft-Demo</div>
<svg style="left:353px;top:6px" width="14" height="14" viewBox="0 0 14 14"><circle cx="7" cy="7" r="6.4" fill="none" stroke="#5f6d80" stroke-width="1.1"/><path d="M7 3.5V10.5M3.5 7H10.5" stroke="#3c95e6" stroke-width="1.6"/></svg>
<div class="cell" style="left:372px"><span class="c">新建</span></div>
<div class="cell" style="left:472px"><span style="font-size:13.36px">C:\Users\NSecsoft-Demo\Desktop\<span class="c">新建</span> Microsoft Word Docu...</span></div>
<div class="cell" style="left:1208px"><span style="font-size:12.6px">2025-10-28 09:09:11</span></div>
</div>
<div class="row g" style="top:459px">
<div class="cell" style="left:4px"><span style="font-size:12px">WJJ<span class="c">策略</span></span></div>
<div class="cell" style="left:92px"><span style="font-size:12.1px">DESKTOP-K85IEOF</span></div>
<div class="cell" style="left:232px">NSecsoft-Demo</div>
<svg style="left:354px;top:6px" width="12" height="14" viewBox="0 0 12 14"><path d="M1.5 0.7 H6.9 L10.4 4.1 V12.2 C10.4 12.8 10.1 13.1 9.5 13.1 H1.5 C0.9 13.1 0.6 12.8 0.6 12.2 V1.5 C0.6 0.9 0.9 0.7 1.5 0.7Z" fill="none" stroke="#5f6d80" stroke-width="1.1"/><path d="M6.7 0.9 V3.2 C6.7 3.8 7 4.1 7.6 4.1 H10.2" fill="none" stroke="#5f6d80" stroke-width="1.1"/></svg>
<div class="cell" style="left:372px"><span class="c">打开</span></div>
<div class="cell" style="left:472px"><span style="font-size:13.25px">C:\Users\NSecsoft-Demo\AppData\Local\Microsoft\OneDrive...</span></div>
<div class="cell" style="left:1208px"><span style="font-size:12.6px">2025-10-28 08:59:28</span></div>
</div>
<div class="row" style="top:486px">
<div class="cell" style="left:4px"><span style="font-size:12px">WJJ<span class="c">策略</span></span></div>
<div class="cell" style="left:92px"><span style="font-size:12.1px">DESKTOP-K85IEOF</span></div>
<div class="cell" style="left:232px">NSecsoft-Demo</div>
<svg style="left:354px;top:6px" width="12" height="14" viewBox="0 0 12 14"><path d="M1.5 0.7 H6.9 L10.4 4.1 V12.2 C10.4 12.8 10.1 13.1 9.5 13.1 H1.5 C0.9 13.1 0.6 12.8 0.6 12.2 V1.5 C0.6 0.9 0.9 0.7 1.5 0.7Z" fill="none" stroke="#5f6d80" stroke-width="1.1"/><path d="M6.7 0.9 V3.2 C6.7 3.8 7 4.1 7.6 4.1 H10.2" fill="none" stroke="#5f6d80" stroke-width="1.1"/></svg>
<div class="cell" style="left:372px"><span class="c">打开</span></div>
<div class="cell" style="left:472px"><span style="font-size:13.25px">C:\Users\NSecsoft-Demo\AppData\Local\Microsoft\OneDrive...</span></div>
<div class="cell" style="left:1208px"><span style="font-size:12.6px">2025-10-28 08:59:28</span></div>
</div>
<div class="row g" style="top:513px">
<div class="cell" style="left:4px"><span style="font-size:12px"><span class="c">未分组</span></span></div>
<div class="cell" style="left:92px"><span style="font-size:12.1px">ban</span></div>
<div class="cell" style="left:232px">16394</div>
<svg style="left:354px;top:6px" width="12" height="14" viewBox="0 0 12 14"><path d="M1.5 0.7 H6.9 L10.4 4.1 V12.2 C10.4 12.8 10.1 13.1 9.5 13.1 H1.5 C0.9 13.1 0.6 12.8 0.6 12.2 V1.5 C0.6 0.9 0.9 0.7 1.5 0.7Z" fill="none" stroke="#5f6d80" stroke-width="1.1"/><path d="M6.7 0.9 V3.2 C6.7 3.8 7 4.1 7.6 4.1 H10.2" fill="none" stroke="#5f6d80" stroke-width="1.1"/></svg>
<div class="cell" style="left:372px"><span class="c">打开</span></div>
<div class="cell" style="left:472px"><span style="font-size:13.0px">C:\12\2222.docx</span></div>
<div class="cell" style="left:1208px"><span style="font-size:12.6px">2025-10-27 11:42:51</span></div>
</div>
<div class="row" style="top:540px">
<div class="cell" style="left:4px"><span style="font-size:12px"><span class="c">未分组</span></span></div>
<div class="cell" style="left:92px"><span style="font-size:12.1px">ban</span></div>
<div class="cell" style="left:232px">16394</div>
<svg style="left:354px;top:6px" width="14" height="14" viewBox="0 0 14 14"><path d="M6.6 1.6 H1.7 C1 1.6 0.7 2 0.7 2.7 V11.7 C0.7 12.4 1 12.7 1.7 12.7 H10.7 C11.4 12.7 11.7 12.4 11.7 11.7 V6.3" fill="none" stroke="#5f6d80" stroke-width="1.1"/><path d="M5.7 8.2 L12 1.9" stroke="#1e88e5" stroke-width="2.9" stroke-linecap="round"/><path d="M6.5 7.4 L11.3 2.6" stroke="#fff" stroke-width="0.9" stroke-linecap="round"/></svg>
<div class="cell" style="left:372px"><span class="c">重命名</span></div>
<div class="cell" style="left:472px"><span style="font-size:12.88px">C:\12\<span class="c">新建</span> DOCX <span class="c">文档</span>.docx</span></div>
<div class="cell" style="left:854px"><span style="font-size:12.94px">C:\12\2222.docx</span></div>
<div class="cell" style="left:1208px"><span style="font-size:12.6px">2025-10-27 11:36:23</span></div>
</div>
<div class="row g" style="top:567px">
<div class="cell" style="left:4px"><span style="font-size:12px"><span class="c">未分组</span></span></div>
<div class="cell" style="left:92px"><span style="font-size:12.1px">ban</span></div>
<div class="cell" style="left:232px">16394</div>
<svg style="left:353px;top:6px" width="14" height="14" viewBox="0 0 14 14"><circle cx="7" cy="7" r="6.4" fill="none" stroke="#5f6d80" stroke-width="1.1"/><path d="M7 3.5V10.5M3.5 7H10.5" stroke="#3c95e6" stroke-width="1.6"/></svg>
<div class="cell" style="left:372px"><span class="c">新建</span></div>
<div class="cell" style="left:472px"><span style="font-size:12.88px">C:\12\<span class="c">新建</span> DOCX <span class="c">文档</span>.docx</span></div>
<div class="cell" style="left:1208px"><span style="font-size:12.6px">2025-10-27 11:36:18</span></div>
</div>
</div>
<svg style="left:0px;top:859px" width="180" height="8" viewBox="0 0 180 8">
<g fill="#a9a9a9">
<rect x="3" y="1" width="1" height="6"/><path d="M8 1V7L5 4Z"/><path d="M12 1V7L9 4Z"/>
<path d="M22.7 1V7L19.7 4Z"/><path d="M27 1V7L24 4Z"/>
<path d="M41 1V7L38 4Z"/>
<path d="M141 1V7L144.2 4Z"/>
<path d="M154 1V7L157.2 4Z"/><path d="M158 1V7L161.2 4Z"/>
<path d="M167.7 1V7L170.9 4Z"/><path d="M171.7 1V7L174.9 4Z"/><rect x="176" y="1" width="1" height="6"/>
</g></svg>
<div class="a" style="left:56px;top:854px;height:19px;line-height:19px;font-size:13px;color:#333;white-space:nowrap"><span class="c">记录</span> 1 of 31</div>
<div class="a" style="left:0;top:874px;width:1446px;height:22px;background:#106ebe"></div>
<div class="a" style="left:8px;top:876px;height:22px;line-height:22px;font-size:12px;color:#fff">就绪</div>
<svg style="left:1245px;top:877px" width="16" height="18" viewBox="0 0 16 18">
<rect x="5.9" y="0.5" width="3.2" height="10" fill="#5aa87a"/>
<path d="M1 6.5 L7.5 13.5 L14 6.5 V9.5 L7.5 16 L1 9.5 Z" fill="#5aa87a"/>
<path d="M4 8.5 L7.5 12.5 L11 8.5 V11 L7.5 14.5 L4 11Z" fill="#5aa87a"/>
<rect x="1" y="15.2" width="13" height="2" fill="#5aa87a"/></svg>
<div class="a" style="left:1266px;top:876px;height:22px;line-height:22px;font-size:12px;color:#fff">任务中心</div>
<svg style="left:1330px;top:880px" width="16" height="12" viewBox="0 0 16 12">
<rect x="0.6" y="0.6" width="14.8" height="11" fill="#fff" stroke="#7a8494" stroke-width="1.1"/>
<rect x="11.8" y="1.6" width="2.2" height="3" fill="#1a73d0"/>
<path d="M2.5 6.6H9.5M2.5 8.6H9.5" stroke="#6a7585" stroke-width="0.9"/></svg>
<div class="a" style="left:1351px;top:876px;height:22px;line-height:22px;font-size:12px;color:#fff;white-space:nowrap">8728<span class="c">条未读信息</span></div>
</body></html>
